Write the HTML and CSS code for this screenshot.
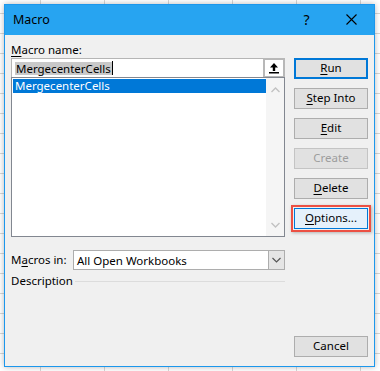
FILE: index.html
```
<!DOCTYPE html>
<html>
<head>
<meta charset="utf-8">
<link rel="stylesheet" href="styles.css">
</head>
<body>
<div class="dialog">
  <div class="titlebar">
    <span class="title">Macro</span>
    <span class="tb-btn help">?</span>
    <span class="tb-btn close"><svg width="11" height="11" viewBox="0 0 11 11"><path d="M0.5 0.5 L10.5 10.5 M10.5 0.5 L0.5 10.5" stroke="#000" stroke-width="1.1" fill="none"/></svg></span>
  </div>
  <div class="content">
    <div class="left">
      <div class="label name-label"><u>M</u>acro name:</div>
      <div class="namebox">
        <div class="nameinput"><span class="sel">MergecenterCells</span><span class="caret"></span></div>
        <div class="upbtn"><svg width="12" height="12" viewBox="0 0 12 12"><path d="M6 1 L10 5.5 L7.2 5.5 L7.2 9 L4.8 9 L4.8 5.5 L2 5.5 Z" fill="#000"/><rect x="1" y="10" width="10" height="1.5" fill="#000"/></svg></div>
      </div>
      <div class="listbox">
        <div class="items"><div class="item selected">MergecenterCells</div></div>
        <div class="vscroll">
          <svg width="9" height="6" viewBox="0 0 9 6"><path d="M0.5 5 L4.5 1 L8.5 5" stroke="#c2c2c2" stroke-width="1.4" fill="none"/></svg>
          <svg width="9" height="6" viewBox="0 0 9 6"><path d="M0.5 1 L4.5 5 L8.5 1" stroke="#c2c2c2" stroke-width="1.4" fill="none"/></svg>
        </div>
      </div>
      <div class="macrosin">
        <span class="label">M<u>a</u>cros in:</span>
        <div class="select">
          <span class="select-text">All Open Workbooks</span>
          <div class="dd"><svg width="9" height="6" viewBox="0 0 9 6"><path d="M0.5 1 L4.5 5 L8.5 1" stroke="#555" stroke-width="1.2" fill="none"/></svg></div>
        </div>
      </div>
      <div class="desc"><span class="label">Description</span><div class="rule"></div></div>
    </div>
    <div class="right">
      <div class="btn default"><u>R</u>un</div>
      <div class="btn"><u>S</u>tep Into</div>
      <div class="btn"><u>E</u>dit</div>
      <div class="btn disabled">Create</div>
      <div class="btn"><u>D</u>elete</div>
      <div class="btn focus highlight"><u>O</u>ptions...</div>
      <div class="btn cancel">Cancel</div>
    </div>
  </div>
</div>
</body>
</html>
```
FILE: styles.css
```
* { box-sizing: border-box; }
html, body { margin: 0; padding: 0; }
body {
  width: 380px;
  height: 371px;
  overflow: hidden;
  background-color: #fff;
  background-image:
    linear-gradient(to right, #d6d6d6 1px, transparent 1px),
    linear-gradient(to bottom, #d6d6d6 1px, transparent 1px);
  background-size: 64px 100%, 100% 20px;
  background-position: 40px 0, 0 13px;
  font-family: "Noto Sans", "Open Sans", sans-serif;
  font-size: 11.5px;
  color: #000;
  padding: 4px 0 0 4px;
}
.dialog {
  width: 371px;
  height: 363px;
  border: 1px solid #1c97ec;
  background: #f0f0f0;
  display: flex;
  flex-direction: column;
  box-shadow: 0 0 6px rgba(0,0,0,0.28);
}
.titlebar {
  height: 30px;
  background: #27a4f1;
  display: flex;
  align-items: center;
  flex: none;
}
.title {
  flex: 1;
  padding-left: 8px;
  font-size: 12.5px;
  padding-bottom: 1px;
}
.tb-btn {
  width: 45px;
  height: 30px;
  display: flex;
  align-items: center;
  justify-content: center;
}
.help { font-size: 14px; padding-bottom: 2px; }
.close { padding-bottom: 1px; }
.content {
  flex: 1;
  display: flex;
  padding-left: 6px;
  gap: 9px;
}
.left {
  width: 274px;
  display: flex;
  flex-direction: column;
}
.label { line-height: 16px; }
.name-label {
  margin-top: 6px;
  height: 17px;
  line-height: 17px;
}
u { text-decoration: underline; text-underline-offset: 2px; }
.namebox {
  height: 19px;
  display: flex;
  border: 1px solid #b5b5b5;
  border-bottom: none;
  background: #fff;
}
.nameinput {
  flex: 1;
  display: flex;
  align-items: center;
  padding-left: 3px;
}
.sel {
  background: #c9c9c9;
  line-height: 13px;
  padding: 0 1px;
}
.caret {
  width: 1px;
  height: 14px;
  background: #000;
}
.upbtn {
  width: 22px;
  margin-top: -1px;
  margin-right: -1px;
  height: 20px;
  border: 2px solid #b8b8b8;
  background: #fff;
  display: flex;
  align-items: center;
  justify-content: center;
}
.listbox {
  height: 160px;
  border: 1px solid #828790;
  background: #fff;
  display: flex;
}
.items {
  flex: 1;
  padding: 1px 0 0 1px;
}
.item {
  height: 14px;
  line-height: 14px;
  padding-left: 2px;
}
.item.selected {
  background: #0078d7;
  color: #fff;
}
.vscroll {
  width: 18px;
  background: #f5f5f5;
  display: flex;
  flex-direction: column;
  justify-content: space-between;
  align-items: center;
  padding: 9px 0 8px;
}
.macrosin {
  margin-top: 13px;
  height: 20px;
  display: flex;
  align-items: center;
}
.macrosin .label { width: 62px; }
.select {
  flex: 1;
  height: 20px;
  border: 1px solid #adadad;
  background: #fff;
  display: flex;
  align-items: center;
}
.select-text { flex: 1; padding-left: 3px; }
.dd {
  width: 17px;
  height: 20px;
  margin: -1px -1px -1px 0;
  border: 1px solid #adadad;
  background: #e5e5e5;
  display: flex;
  align-items: center;
  justify-content: center;
}
.desc {
  margin-top: 3px;
  height: 16px;
  display: flex;
  align-items: center;
}
.desc .label { width: 64px; }
.rule {
  flex: 1;
  height: 1px;
  background: #dcdcdc;
}
.right {
  width: 74px;
  display: flex;
  flex-direction: column;
  padding-top: 23px;
  padding-bottom: 9px;
}
.btn {
  height: 21px;
  margin-bottom: 9px;
  border: 1px solid #adadad;
  background: #e1e1e1;
  display: flex;
  align-items: center;
  justify-content: center;
  line-height: 1;
  padding-bottom: 1px;
}
.btn.default { border: 2px solid #0078d7; }
.btn.disabled { color: #9d9d9d; border-color: #c4c4c4; }
.btn.focus { border-color: #0078d7; background: #e5f1fb; }
.btn.highlight { position: relative; }
.btn.highlight::after {
  content: "";
  position: absolute;
  left: -4px;
  right: -4px;
  top: -4px;
  bottom: -4px;
  border: 2px solid #ec5043;
  box-shadow: 1px 1px 3px rgba(0,0,0,0.25);
}
.btn.cancel { margin-top: auto; margin-bottom: 0; }
```
